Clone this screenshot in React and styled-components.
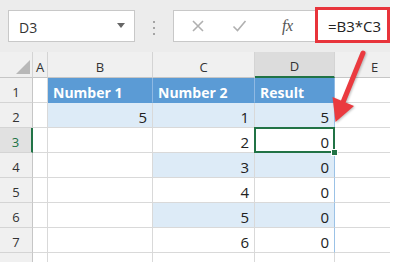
import React from 'react';
import styled, { createGlobalStyle } from 'styled-components';

const GlobalStyle = createGlobalStyle`
  html, body { margin: 0; padding: 0; background: #ffffff; }
  body { font-family: 'Open Sans', 'Liberation Sans', sans-serif; }
`;

const Frame = styled.div`
  width: 390px;
  height: 262px;
  overflow: hidden;
  background: #ececec;
`;

const Toolbar = styled.div`
  display: flex;
  align-items: flex-start;
  height: 52px;
  padding: 7px 0 0 8px;
  box-sizing: border-box;
`;

const NameBox = styled.div`
  width: 127px;
  height: 32px;
  margin-top: 3px;
  box-sizing: border-box;
  background: #fff;
  border: 1px solid #c8c8c8;
  display: flex;
  align-items: center;
  justify-content: space-between;
  padding: 2px 9px 0 10px;
  font-size: 14px;
  color: #333;
`;

const Caret = styled.span`
  width: 0;
  height: 0;
  border-left: 4px solid transparent;
  border-right: 4px solid transparent;
  border-top: 5px solid #666;
  margin-top: -3px;
`;

const Dots = styled.div`
  width: 38px;
  height: 42px;
  display: flex;
  flex-direction: column;
  align-items: center;
  justify-content: center;
  gap: 4px;
  span {
    width: 2px;
    height: 2px;
    border-radius: 50%;
    background: #8c8c8c;
  }
`;

const FormulaBar = styled.div`
  width: 144px;
  height: 32px;
  margin-top: 3px;
  box-sizing: border-box;
  background: #fff;
  border: 1px solid #c8c8c8;
  display: flex;
  align-items: center;
  padding-left: 17px;
  gap: 27px;
  color: #b0b0b0;
`;

const Fx = styled.span`
  font-family: 'Liberation Serif', serif;
  font-style: italic;
  font-size: 16px;
  color: #555;
  margin-left: 8px;
  letter-spacing: -0.5px;
`;

const FormulaText = styled.div`
  width: 75px;
  height: 36px;
  margin-left: -2px;
  box-sizing: border-box;
  background: #fff;
  border: 3px solid #e8343b;
  display: flex;
  align-items: center;
  padding: 2px 0 0 10px;
  font-size: 15px;
  color: #222;
  position: relative;
`;

const Sheet = styled.div`
  position: relative;
  display: grid;
  grid-template-columns: 33px 15px 105px 102px 80px 80px;
  grid-template-rows: 26px repeat(8, 25px);
  background: #fff;
`;

const HeadCell = styled.div`
  box-sizing: border-box;
  background: ${p => (p.$active ? '#dcdcdc' : '#f0f0f0')};
  border-right: 1px solid #d4d4d4;
  border-bottom: ${p => (p.$active ? '2px solid #217346' : '1px solid #c6c6c6')};
  display: flex;
  align-items: center;
  justify-content: center;
  padding-top: 4px;
  font-size: 13px;
  color: #333;
`;

const Corner = styled(HeadCell)`
  position: relative;
  &::after {
    content: '';
    position: absolute;
    right: 2px;
    bottom: 3px;
    width: 14px;
    height: 14px;
    background: #b8b8b8;
    clip-path: polygon(100% 0, 100% 100%, 0 100%);
  }
`;

const RowNum = styled.div`
  box-sizing: border-box;
  background: ${p => (p.$active ? '#e1e1e1' : '#f0f0f0')};
  border-bottom: 1px solid #d4d4d4;
  border-right: ${p => (p.$active ? '2px solid #217346' : '1px solid #c6c6c6')};
  display: flex;
  align-items: center;
  justify-content: center;
  padding-top: 4px;
  font-size: 13px;
  color: ${p => (p.$active ? '#217346' : '#333')};
`;

const fills = {
  head: '#5b9bd5',
  band: '#ddebf7',
  none: '#ffffff',
};

const Cell = styled.div`
  position: relative;
  box-sizing: border-box;
  background: ${p => fills[p.$fill || 'none']};
  border-right: 1px solid ${p => (p.$edge ? '#9bc2e6' : p.$fill === 'head' ? '#8fb9e3' : '#d9d9d9')};
  border-bottom: 1px solid ${p => (p.$fill === 'head' ? '#5b9bd5' : '#d9d9d9')};
  display: flex;
  align-items: center;
  justify-content: ${p => (p.$fill === 'head' ? 'flex-start' : 'flex-end')};
  padding: 4px 5px 0 5px;
  font-size: ${p => (p.$fill === 'head' ? '14px' : '15px')};
  font-weight: ${p => (p.$fill === 'head' ? 700 : 400)};
  color: ${p => (p.$fill === 'head' ? '#fff' : '#222')};
  ${p =>
    p.$selected &&
    `
    &::before {
      content: '';
      position: absolute;
      left: -1px;
      top: -1px;
      right: -1px;
      bottom: -1px;
      border: 2px solid #217346;
    }
    &::after {
      content: '';
      position: absolute;
      right: -4px;
      bottom: -4px;
      width: 5px;
      height: 5px;
      background: #217346;
      border: 1px solid #fff;
      z-index: 2;
    }
  `}
`;

const Arrow = styled.svg`
  position: absolute;
  left: 320px;
  top: -12px;
  width: 60px;
  height: 90px;
  overflow: visible;
  filter: drop-shadow(1px 1px 1px rgba(0, 0, 0, 0.25));
`;

const columns = ['A', 'B', 'C', 'D', 'E'];

const rows = [
  { n: 1, b: 'Number 1', c: 'Number 2', d: 'Result', fill: 'head' },
  { n: 2, b: '5', c: '1', d: '5', fill: 'band', bFill: 'band' },
  { n: 3, b: '', c: '2', d: '0', fill: 'none' },
  { n: 4, b: '', c: '3', d: '0', fill: 'band' },
  { n: 5, b: '', c: '4', d: '0', fill: 'none' },
  { n: 6, b: '', c: '5', d: '0', fill: 'band' },
  { n: 7, b: '', c: '6', d: '0', fill: 'none' },
  { n: 8, b: '', c: '', d: '', fill: 'none', blank: true },
];

function XIcon() {
  return (
    <svg width="14" height="14" viewBox="0 0 14 14" fill="none" stroke="currentColor" strokeWidth="1.6">
      <path d="M2 2 L12 12 M12 2 L2 12" />
    </svg>
  );
}

function CheckIcon() {
  return (
    <svg width="15" height="14" viewBox="0 0 15 14" fill="none" stroke="currentColor" strokeWidth="1.6">
      <path d="M1.5 7.5 L5.5 11.5 L13.5 2" />
    </svg>
  );
}

export default function App() {
  return (
    <>
      <GlobalStyle />
      <Frame>
        <Toolbar>
          <NameBox>
            D3
            <Caret />
          </NameBox>
          <Dots>
            <span />
            <span />
            <span />
          </Dots>
          <FormulaBar>
            <XIcon />
            <CheckIcon />
            <Fx>fx</Fx>
          </FormulaBar>
          <FormulaText>=B3*C3</FormulaText>
        </Toolbar>
        <Sheet>
          <Corner />
          {columns.map(col => (
            <HeadCell key={col} $active={col === 'D'}>
              {col}
            </HeadCell>
          ))}
          {rows.map(r => (
            <React.Fragment key={r.n}>
              <RowNum $active={r.n === 3}>{r.blank ? '' : r.n}</RowNum>
              <Cell />
              <Cell $fill={r.fill === 'head' ? 'head' : r.bFill}>{r.b}</Cell>
              <Cell $fill={r.blank ? 'none' : r.fill}>{r.c}</Cell>
              <Cell $fill={r.blank ? 'none' : r.fill} $edge={!r.blank && r.fill !== 'head'} $selected={r.n === 3}>
                {r.d}
              </Cell>
              <Cell />
            </React.Fragment>
          ))}
          <Arrow viewBox="320 40 60 90">
            <path d="M363 53 L343.5 101" stroke="#ea3a3f" strokeWidth="5" strokeLinecap="round" fill="none" />
            <path d="M335.5 122 L332.5 97 L354 106 Z" fill="#ea3a3f" />
          </Arrow>
        </Sheet>
      </Frame>
    </>
  );
}
